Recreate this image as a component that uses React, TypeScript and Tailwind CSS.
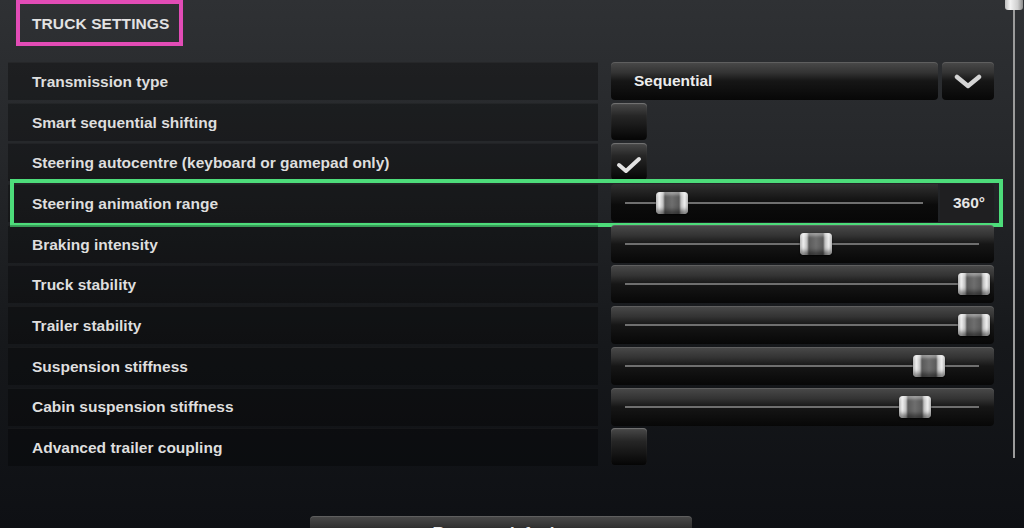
import React from "react";

type Row =
  | { label: string; kind: "dropdown"; value: string }
  | { label: string; kind: "check"; checked: boolean }
  | { label: string; kind: "slider"; thumb: number; value?: string; highlight?: boolean };

const rows: Row[] = [
  { label: "Transmission type", kind: "dropdown", value: "Sequential" },
  { label: "Smart sequential shifting", kind: "check", checked: false },
  { label: "Steering autocentre (keyboard or gamepad only)", kind: "check", checked: true },
  { label: "Steering animation range", kind: "slider", thumb: 45, value: "360°", highlight: true },
  { label: "Braking intensity", kind: "slider", thumb: 189 },
  { label: "Truck stability", kind: "slider", thumb: 347 },
  { label: "Trailer stability", kind: "slider", thumb: 347 },
  { label: "Suspension stiffness", kind: "slider", thumb: 302 },
  { label: "Cabin suspension stiffness", kind: "slider", thumb: 288 },
  { label: "Advanced trailer coupling", kind: "check", checked: false },
];

const glossy =
  "bg-[linear-gradient(180deg,#4a4a4a_0%,#333_28%,#161616_50%,#070707_100%)] shadow-[inset_0_1px_0_rgba(255,255,255,0.12)]";

function Checkbox({ checked }: { checked: boolean }) {
  return (
    <div className="w-[36px] h-[37px] rounded-[4px] bg-[linear-gradient(180deg,#4a4a4a_0%,#262626_35%,#050505_100%)] shadow-[inset_0_1px_1px_rgba(255,255,255,0.25)] flex items-center justify-center">
      {checked && (
        <svg width="26" height="20" viewBox="0 0 26 20" className="mt-[6px]">
          <polyline
            points="3,10 10,16 23,4"
            fill="none"
            stroke="#e2e2e2"
            strokeWidth="4"
            strokeLinecap="round"
            strokeLinejoin="round"
          />
        </svg>
      )}
    </div>
  );
}

function Thumb({ left }: { left: number }) {
  return (
    <div
      className="absolute top-1/2 -translate-y-1/2 w-[32px] h-[22px] rounded-[4px] bg-[linear-gradient(90deg,#d9d9d9_0%,#f4f4f4_10%,#bdbdbd_22%,#5a5a5a_28%,#6e6e6e_50%,#5a5a5a_72%,#bdbdbd_78%,#f4f4f4_90%,#d9d9d9_100%)] shadow-[inset_0_3px_3px_rgba(255,255,255,0.35),inset_0_-4px_4px_rgba(0,0,0,0.45),0_1px_2px_rgba(0,0,0,0.8)]"
      style={{ left }}
    />
  );
}

function Slider({ thumb, value }: { thumb: number; value?: string }) {
  if (value) {
    return (
      <div className="flex w-[383px] h-full">
        <div className="relative w-[327px] h-full rounded-l-[4px] bg-[linear-gradient(180deg,#303030_0%,#1c1c1c_30%,#0b0b0b_55%,#070707_100%)]">
          <div className="absolute left-[14px] right-[15px] top-1/2 h-[2px] -translate-y-1/2 bg-[#6f6f6f]" />
          <Thumb left={thumb} />
        </div>
        <div className="flex-1 ml-[2px] rounded-r-[4px] bg-[#1f1f21] flex items-center justify-end pr-[9px] text-[15.5px] font-bold text-[#e6e6e6]">
          {value}
        </div>
      </div>
    );
  }
  return (
    <div className={`relative w-[383px] h-full rounded-[4px] ${glossy}`}>
      <div className="absolute left-[14px] right-[15px] top-1/2 h-[2px] -translate-y-1/2 bg-[#6f6f6f]" />
      <Thumb left={thumb} />
    </div>
  );
}

function Dropdown({ value }: { value: string }) {
  return (
    <div className="flex w-[383px] h-full gap-[4px]">
      <div className={`w-[327px] h-full rounded-[4px] ${glossy} flex items-center pl-[23px] text-[15.5px] font-bold text-[#ececec]`}>
        {value}
      </div>
      <div className={`flex-1 h-full rounded-[4px] ${glossy} flex items-center justify-center`}>
        <svg width="28" height="15" viewBox="0 0 28 15">
          <polyline
            points="3,3 14,12 25,3"
            fill="none"
            stroke="#d4d4d4"
            strokeWidth="4.5"
            strokeLinecap="round"
            strokeLinejoin="round"
          />
        </svg>
      </div>
    </div>
  );
}

export default function App() {
  return (
    <div className="relative w-[1024px] h-[528px] overflow-hidden bg-[linear-gradient(180deg,#2f3134_0%,#25272a_30%,#16181b_65%,#0e1014_100%)] font-['Liberation_Sans',Arial,sans-serif]">
      {/* scrollbar */}
      <div className="absolute left-[1013px] top-0 w-[2px] h-[458px] bg-[#9b9b9b]" />
      <div className="absolute left-[1005px] top-[-2px] w-[18px] h-[12px] rounded-[3px] bg-[linear-gradient(90deg,#bdbdbd_0%,#f2f2f2_30%,#cfcfcf_70%,#8c8c8c_100%)]" />

      <div className="pl-[16px]">
        <div className="w-[167px] h-[46px] border-[4px] border-[#e24cb6] flex items-center pl-[12px] pt-[1px] text-[15.5px] font-bold text-[#e2e2e2] tracking-[0.1px]">
          TRUCK SETTINGS
        </div>
      </div>

      <div className="mt-[16px] pl-[8px] flex flex-col gap-[2.7px]">
        {rows.map((row) => (
          <div key={row.label} className="relative flex h-[38px] gap-[13px]">
            <div className="w-[590px] h-full bg-black/30 border-t border-white/[0.04] flex items-center pl-[24px] text-[15.5px] font-bold text-[#dedede]">
              {row.label}
            </div>
            <div className="w-[383px] h-full">
              {row.kind === "dropdown" && <Dropdown value={row.value} />}
              {row.kind === "check" && <Checkbox checked={row.checked} />}
              {row.kind === "slider" && <Slider thumb={row.thumb} value={row.value} />}
            </div>
            {row.kind === "slider" && row.highlight && (
              <div className="absolute left-[2px] top-[-5px] w-[993px] h-[48px] border-[4px] border-[#4ddc7a] pointer-events-none" />
            )}
          </div>
        ))}
      </div>

      <div className="mt-[50px] pl-[310px]">
        <div className={`w-[382px] h-[38px] rounded-[4px] ${glossy} flex items-start justify-center pt-[5px] text-[17px] font-bold text-[#ececec]`}>
          Reset to defaults
        </div>
      </div>
    </div>
  );
}
